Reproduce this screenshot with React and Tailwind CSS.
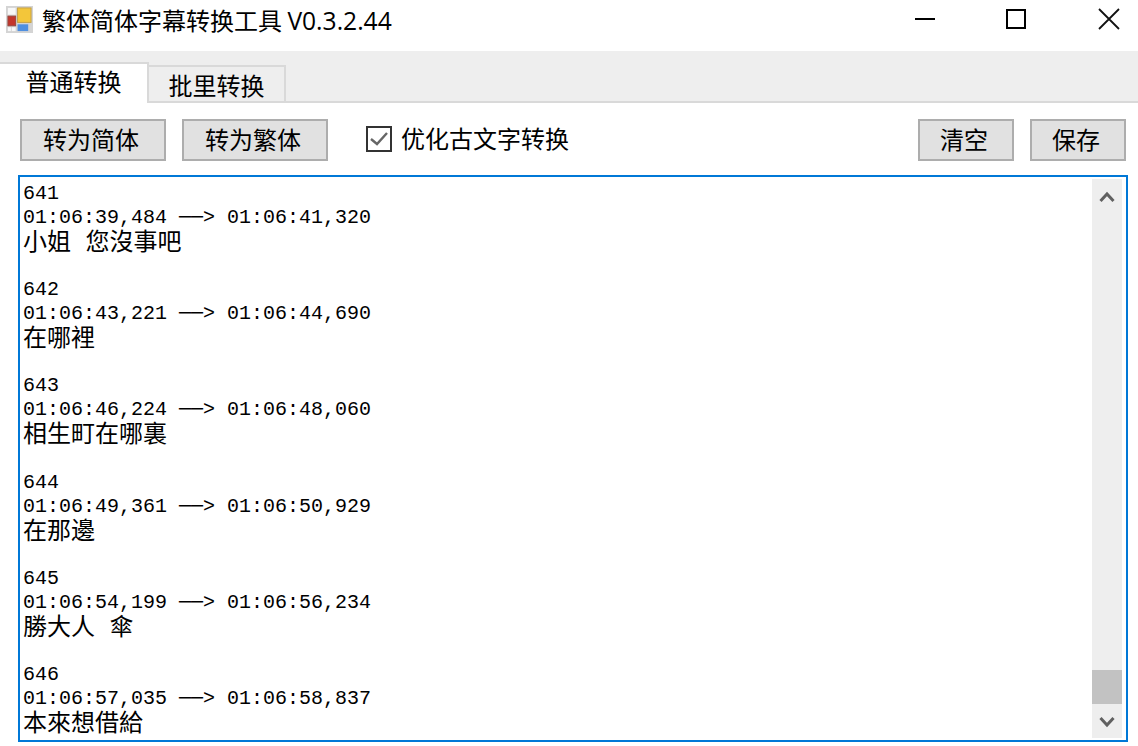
import React from 'react';

const entries = [
  { id: 641, time: '01:06:39,484', end: '01:06:41,320', text: '小姐 您沒事吧' },
  { id: 642, time: '01:06:43,221', end: '01:06:44,690', text: '在哪裡' },
  { id: 643, time: '01:06:46,224', end: '01:06:48,060', text: '相生町在哪裏' },
  { id: 644, time: '01:06:49,361', end: '01:06:50,929', text: '在那邊' },
  { id: 645, time: '01:06:54,199', end: '01:06:56,234', text: '勝大人 傘' },
  { id: 646, time: '01:06:57,035', end: '01:06:58,837', text: '本來想借給' },
];

const cjk = "font-['Liberation_Mono','Noto_Sans_CJK_SC',monospace]";

const AppIcon = () => (
  <svg width="27" height="27" viewBox="0 0 28 28" className="shrink-0 blur-[0.4px]">
    <rect x="0" y="0" width="28" height="28" fill="#d4d4d4" />
    <rect x="2" y="2" width="8" height="7" fill="#f8f8f8" />
    <rect x="12" y="2" width="14" height="15" fill="#f3c63a" stroke="#c4a045" />
    <rect x="2" y="10.5" width="8" height="10" fill="#c4352b" stroke="#96473f" />
    <rect x="12" y="19" width="11" height="7" fill="#4f8fe0" />
    <rect x="2" y="22" width="3" height="4" fill="#f8f8f8" />
    <rect x="6" y="22" width="4" height="4" fill="#f8f8f8" />
  </svg>
);

const Btn = ({ label, width }) => (
  <button className={`h-[42px] shrink-0 border-2 border-[#adadad] bg-[#e1e1e1] pr-1 pb-[3px] text-[24px] leading-none text-black ${width}`}>
    {label}
  </button>
);

const App = () => {
  return (
    <div className="flex h-[746px] w-[1138px] flex-col overflow-hidden bg-white font-['Noto_Sans_CJK_SC',sans-serif] text-black">
      <div className="flex h-[51px] shrink-0 items-start pt-[6px] pl-[6px]">
        <AppIcon />
        <span className="mt-[1px] ml-[9px] text-[24px] leading-[26px]">
          繁体简体字幕转换工具 <span className="font-['Open_Sans','Noto_Sans',sans-serif] text-[24.6px]">V0.3.2.44</span>
        </span>
        <div className="ml-auto flex items-center pt-[2px] pr-[18px]">
          <div className="h-[2px] w-5 bg-black" />
          <div className="ml-[71px] h-5 w-5 border-2 border-black" />
          <svg width="22" height="22" viewBox="0 0 22 22" className="ml-[72px]">
            <path d="M1 1 L21 21 M21 1 L1 21" stroke="#111" strokeWidth="1.8" fill="none" />
          </svg>
        </div>
      </div>

      <div className="flex h-[52px] shrink-0 items-end border-b-2 border-[#d9d9d9] bg-[#eeeeee]">
        <div className="-mb-[2px] flex h-[41px] w-[149px] items-center justify-center border-t-2 border-r-2 border-[#d9d9d9] bg-white pb-[5px] text-[24px] leading-none">
          普通转换
        </div>
        <div className="flex h-[36px] w-[137px] items-center justify-center border-t-2 border-r-2 border-[#d9d9d9] pt-[2px] text-[24px] leading-none">
          批里转换
        </div>
      </div>

      <div className="flex h-[72px] shrink-0 items-center pt-[2px] pr-3 pl-5">
        <Btn label="转为简体" width="w-[146px]" />
        <div className="ml-4">
          <Btn label="转为繁体" width="w-[146px]" />
        </div>
        <div className="mb-[2px] ml-[38px] flex h-[26px] w-[26px] items-center justify-center border-2 border-[#333333] bg-white">
          <svg width="22" height="22" viewBox="0 0 22 22">
            <path d="M3 11 L9 16 L19 5" stroke="#666" strokeWidth="2.4" fill="none" />
          </svg>
        </div>
        <span className="mb-[4px] ml-[9px] text-[24px] leading-none">优化古文字转换</span>
        <div className="ml-auto">
          <Btn label="清空" width="w-[96px]" />
        </div>
        <div className="ml-4">
          <Btn label="保存" width="w-[96px]" />
        </div>
      </div>

      <div className="ml-[18px] flex h-[567px] w-[1110px] shrink-0 border-2 border-[#0078d7] bg-white">
        <div className={`min-w-0 flex-1 overflow-hidden pt-[5px] pl-[3px] text-[20px] ${cjk}`}>
          {entries.map((e) => (
            <div key={e.id} className="h-[96.2px] leading-[24.05px] whitespace-pre">
              <div>{e.id}</div>
              <div>{e.time} ──&gt; {e.end}</div>
              <div className="pt-[2px] text-[24px]">{e.text}</div>
            </div>
          ))}
        </div>
        <div className="my-[2px] mr-1 flex w-[30px] shrink-0 flex-col items-center bg-[#eeeeee]">
          <div className="flex h-[36px] items-center justify-center">
            <svg width="16" height="12" viewBox="0 0 16 12">
              <path d="M1.5 10 L8 3 L14.5 10" stroke="#606060" strokeWidth="3" fill="none" />
            </svg>
          </div>
          <div className="mt-[455px] h-[34px] w-full bg-[#c2c2c2]" />
          <div className="mt-auto flex h-[33px] items-center justify-center">
            <svg width="16" height="12" viewBox="0 0 16 12">
              <path d="M1.5 2 L8 9 L14.5 2" stroke="#606060" strokeWidth="3" fill="none" />
            </svg>
          </div>
        </div>
      </div>
    </div>
  );
};

export default App;
